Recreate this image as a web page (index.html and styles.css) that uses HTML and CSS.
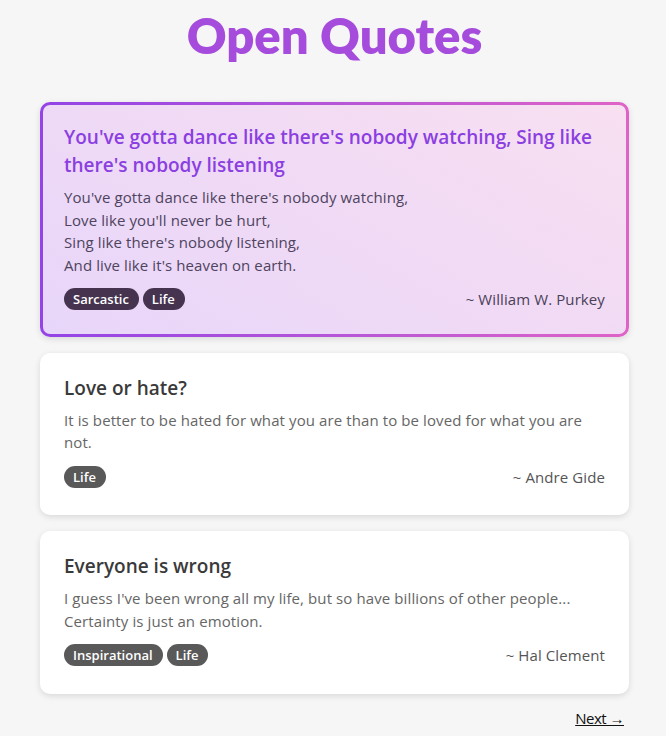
FILE: index.html
```html
<!DOCTYPE html>
<html lang="en">
<head>
<meta charset="utf-8">
<title>Open Quotes</title>
<link rel="stylesheet" href="styles.css">
</head>
<body>
<main class="page">
  <h1 class="brand">Open Quotes</h1>
  <section class="list">
    <article class="card card-active">
      <h2 class="card-title">You've gotta dance like there's nobody watching, Sing like there's nobody listening</h2>
      <p class="card-text">You've gotta dance like there's nobody watching,<br>Love like you'll never be hurt,<br>Sing like there's nobody listening,<br>And live like it's heaven on earth.</p>
      <div class="card-foot">
        <div class="tags"><span class="tag">Sarcastic</span><span class="tag">Life</span></div>
        <span class="author">~ William W. Purkey</span>
      </div>
    </article>
    <article class="card">
      <h2 class="card-title">Love or hate?</h2>
      <p class="card-text">It is better to be hated for what you are than to be loved for what you are not.</p>
      <div class="card-foot">
        <div class="tags"><span class="tag">Life</span></div>
        <span class="author">~ Andre Gide</span>
      </div>
    </article>
    <article class="card">
      <h2 class="card-title">Everyone is wrong</h2>
      <p class="card-text">I guess I've been wrong all my life, but so have billions of other people... Certainty is just an emotion.</p>
      <div class="card-foot">
        <div class="tags"><span class="tag">Inspirational</span><span class="tag">Life</span></div>
        <span class="author">~ Hal Clement</span>
      </div>
    </article>
  </section>
  <nav class="pager"><a class="next" href="#">Next →</a></nav>
</main>
</body>
</html>
```

FILE: styles.css
```css
html, body {
  margin: 0;
  padding: 0;
  background: #f6f6f6;
}
body {
  font-family: "Open Sans", "Noto Sans", sans-serif;
  color: #555;
}
.page {
  width: 589px;
  margin-left: 40px;
}
.brand {
  margin: 0;
  padding-top: 7px;
  height: 102px;
  box-sizing: border-box;
  text-align: center;
  font-family: "Lato", "Open Sans", sans-serif;
  font-size: 49px;
  font-weight: 800;
  line-height: 56px;
  color: #a64cdd;
}
.list {
  display: flex;
  flex-direction: column;
  gap: 16px;
}
.card {
  border-radius: 10px;
  padding: 21px 24px 27px;
  background: #fff;
  box-shadow: 0 2px 6px rgba(0, 0, 0, 0.12);
}
.card-active {
  border: 3px solid transparent;
  padding: 18px 21px 23px;
  background:
    linear-gradient(30deg, #e8d6fa 0%, #f0daf5 50%, #f8e0f1 100%) padding-box,
    linear-gradient(90deg, #9343e6 0%, #b957d6 55%, #df63c7 100%) border-box;
}
.card-title {
  margin: 0 0 7px;
  font-size: 19px;
  line-height: 28px;
  font-weight: 600;
  color: #3a3a3a;
}
.card-active .card-title {
  color: #8b3fe1;
}
.card-text {
  margin: 0;
  font-size: 15px;
  line-height: 22.5px;
  letter-spacing: 0.1px;
  color: #666;
}
.card-active .card-text {
  color: #4e4460;
}
.card-foot {
  margin-top: 12px;
  display: flex;
  justify-content: space-between;
  align-items: center;
}
.tags {
  display: flex;
  gap: 4px;
}
.tag {
  display: inline-block;
  height: 22px;
  line-height: 22px;
  padding: 0 10px 0 9px;
  border-radius: 11px;
  background: #595959;
  color: #fff;
  font-size: 13px;
  font-weight: 600;
}
.card-active .tag {
  background: #45334f;
}
.author {
  font-size: 15px;
  line-height: 22.5px;
  letter-spacing: 0.1px;
  color: #555;
}
.card-active .author {
  color: #4a4058;
}
.pager {
  display: flex;
  justify-content: flex-end;
  padding: 13px 5px 0 0;
}
.next {
  font-size: 15px;
  line-height: 22px;
  letter-spacing: -0.5px;
  color: #111;
  text-decoration: underline;
}
```
